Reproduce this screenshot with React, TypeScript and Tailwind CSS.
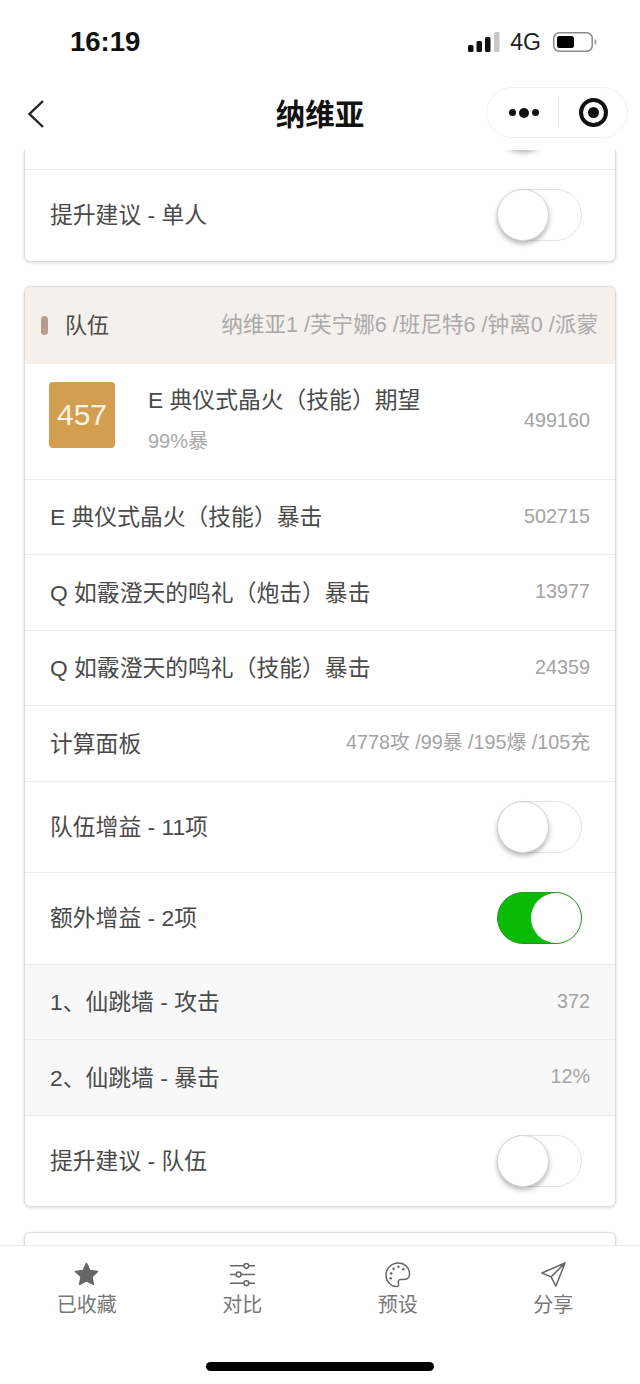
import React from "react";

type ToggleProps = {
  on?: boolean;
};

const Toggle = ({ on }: ToggleProps) => {
  if (on) {
    return (
      <div className="flex h-[52px] w-[85px] shrink-0 justify-end rounded-full border border-[#2f8f2f] bg-[#09bb07]">
        <div className="h-[50px] w-[50px] rounded-full bg-white" />
      </div>
    );
  }
  return (
    <div className="h-[52px] w-[85px] shrink-0 rounded-full border border-[#e3e3e3] bg-white">
      <div className="-ml-px -mt-px h-[52px] w-[52px] rounded-full border border-[#d4d4d4] bg-white shadow-[0_3px_5px_rgba(0,0,0,0.28)]" />
    </div>
  );
};

type RowProps = {
  label: string;
  value?: string;
  shaded?: boolean;
};

const Row = ({ label, value, shaded }: RowProps) => (
  <div
    className={`flex h-[75.5px] items-center justify-between border-t border-[#ececec] pl-[25px] pr-[25px] ${
      shaded ? "bg-[#f8f8f8]" : ""
    }`}
  >
    <span className="text-[22.8px] text-[#4a4a4a]">{label}</span>
    <span className="pb-px text-[19.8px] text-[#a3a3a3]">{value}</span>
  </div>
);

const ToggleRow = ({ label, on }: { label: string; on?: boolean }) => (
  <div className="flex h-[91.5px] items-center justify-between border-t border-[#ececec] pb-px pl-[25px] pr-[33px]">
    <span className="text-[22.8px] text-[#4a4a4a]">{label}</span>
    <Toggle on={on} />
  </div>
);

const StatusBar = () => (
  <div className="flex h-[84px] shrink-0 items-center justify-between pl-[70px] pr-[43px]">
    <span className="text-[27.5px] font-bold text-[#111]">16:19</span>
    <div className="flex items-center">
      <svg width="32" height="20" viewBox="0 0 32 20">
        <rect x="0" y="13" width="5.5" height="7" rx="1.5" fill="#111" />
        <rect x="8.5" y="9" width="5.5" height="11" rx="1.5" fill="#111" />
        <rect x="17" y="5" width="5.5" height="15" rx="1.5" fill="#111" />
        <rect x="26" y="0" width="5.5" height="20" rx="1.5" fill="#c8c8c8" />
      </svg>
      <span className="ml-[10px] text-[23px] text-[#222]">4G</span>
      <svg className="ml-[12px]" width="44" height="20" viewBox="0 0 44 20">
        <rect x="0.75" y="0.75" width="38.5" height="18.5" rx="5.5" fill="none" stroke="#8a8a8a" strokeWidth="1.5" />
        <rect x="4" y="4" width="17" height="12" rx="2.5" fill="#000" />
        <path d="M41.5 7v6c1.3-.5 2-1.700 2-3s-.7-2.500-2-3z" fill="#9a9a9a" />
      </svg>
    </div>
  </div>
);

const NavBar = () => (
  <div className="relative flex h-[66px] shrink-0 items-center justify-center">
    <svg className="absolute left-[26px] top-[14px]" width="20" height="32" viewBox="0 0 20 32">
      <path d="M17 3 3.500 16 17 29" fill="none" stroke="#222" strokeWidth="2.400" />
    </svg>
    <span className="pb-[4px] text-[29.5px] font-bold text-[#111]">纳维亚</span>
    <div className="absolute left-[486px] top-[3px] flex h-[51px] w-[142px] items-center rounded-full border border-[#f1f1f1] bg-white">
      <div className="flex w-[71px] items-center justify-center gap-[3px] pl-[2px]">
        <span className="h-[7px] w-[7px] rounded-full bg-[#111]" />
        <span className="h-[10px] w-[10px] rounded-full bg-[#111]" />
        <span className="h-[7px] w-[7px] rounded-full bg-[#111]" />
      </div>
      <div className="h-[30px] w-px bg-[#e4e4e4]" />
      <div className="flex flex-1 items-center justify-center">
        <div className="flex h-[29px] w-[29px] items-center justify-center rounded-full border-[4px] border-[#111]">
          <div className="h-[11px] w-[11px] rounded-full bg-[#111]" />
        </div>
      </div>
    </div>
  </div>
);

const TeamCard = () => (
  <div className="mt-[24px] overflow-hidden rounded-[6px] border border-[#dcdcdc] bg-white shadow-[0_1px_3px_rgba(0,0,0,0.14)]">
    <div className="flex h-[77px] items-center justify-between bg-[#f4f1ec] pl-[16px] pr-[17px]">
      <div className="flex items-center">
        <span className="h-[19px] w-[7px] rounded-full bg-[#b79b8e]" />
        <span className="ml-[17px] text-[22px] text-[#4a4a4a]">队伍</span>
      </div>
      <span className="text-[21.6px] text-[#aaaaaa]">纳维亚1 /芙宁娜6 /班尼特6 /钟离0 /派蒙</span>
    </div>
    <div className="flex h-[115.4px] items-start pl-[24px] pr-[25px] pt-[18px]">
      <div className="flex h-[66px] w-[66px] shrink-0 items-center justify-center rounded-[4px] bg-[#d29e4f] text-[30px] text-[#fbf3e4]">
        457
      </div>
      <div className="ml-[33px] mt-[3px] flex flex-1 flex-col gap-[13px]">
        <span className="text-[22.8px] leading-[30px] text-[#4a4a4a]">E 典仪式晶火（技能）期望</span>
        <span className="text-[20px] leading-[26px] text-[#aaaaaa]">99%暴</span>
      </div>
      <span className="self-center pb-[18px] text-[19.8px] text-[#a3a3a3]">499160</span>
    </div>
    <Row label="E 典仪式晶火（技能）暴击" value="502715" />
    <Row label="Q 如霰澄天的鸣礼（炮击）暴击" value="13977" />
    <Row label="Q 如霰澄天的鸣礼（技能）暴击" value="24359" />
    <Row label="计算面板" value="4778攻 /99暴 /195爆 /105充" />
    <ToggleRow label="队伍增益 - 11项" />
    <ToggleRow label="额外增益 - 2项" on />
    <Row label="1、仙跳墙 - 攻击" value="372" shaded />
    <Row label="2、仙跳墙 - 暴击" value="12%" shaded />
    <ToggleRow label="提升建议 - 队伍" />
  </div>
);

const TabBar = () => (
  <div className="relative h-[139px] shrink-0 border-t border-[#ececec] bg-white">
    <div className="grid grid-cols-4 px-[9px] pt-[14px]">
      <div className="flex flex-col items-center text-[20px] leading-[28px] text-[#777777]">
        <svg className="my-px" width="27" height="27" viewBox="0 0 28 28">
          <path
            d="M14 2.500l3.500 7.300 8 1.100-5.800 5.500 1.400 7.900L14 20.500l-7.100 3.800 1.400-7.900-5.800-5.500 8-1.100z"
            fill="#666666"
            stroke="#666666"
            strokeWidth="1.500"
            strokeLinejoin="round"
          />
        </svg>
        <span className="mt-[2px]">已收藏</span>
      </div>
      <div className="flex flex-col items-center text-[20px] leading-[28px] text-[#777777]">
        <svg className="my-px" width="27" height="27" viewBox="0 0 28 28" fill="none" stroke="#666666" strokeWidth="1.500">
          <path d="M1 5h14.500M20.500 5H27M1 14h6.500M12.500 14H27M1 23h14.500M20.500 23H27" />
          <circle cx="18" cy="5" r="2.500" />
          <circle cx="10" cy="14" r="2.500" />
          <circle cx="18" cy="23" r="2.500" />
        </svg>
        <span className="mt-[2px]">对比</span>
      </div>
      <div className="flex flex-col items-center text-[20px] leading-[28px] text-[#777777]">
        <svg className="my-px" width="27" height="27" viewBox="0 0 28 28" fill="none" stroke="#666666" strokeWidth="1.500">
          <path d="M15 2C8 2 2 7.500 2 14.500 2 21 7 26.500 12.500 26.500c2.300 0 3-1.500 2.500-3-.6-1.800-.3-4 2.300-4.300 3-.3 9.200 1 9.200-5.700C26.500 7 21.500 2 15 2z" />
          <circle cx="7.500" cy="13" r="1.300" fill="#666666" stroke="none" />
          <circle cx="10" cy="8" r="1.300" fill="#666666" stroke="none" />
          <circle cx="15" cy="6" r="1.300" fill="#666666" stroke="none" />
          <circle cx="20" cy="8.500" r="1.300" fill="#666666" stroke="none" />
          <circle cx="7" cy="18" r="1.300" fill="#666666" stroke="none" />
        </svg>
        <span className="mt-[2px]">预设</span>
      </div>
      <div className="flex flex-col items-center text-[20px] leading-[28px] text-[#777777]">
        <svg className="my-px" width="27" height="27" viewBox="0 0 28 28" fill="none" stroke="#666666" strokeWidth="1.600" strokeLinejoin="round">
          <path d="M26 2 2 12.500l9.500 4 5 9.500zM26 2 11.500 16.500" />
        </svg>
        <span className="mt-[2px]">分享</span>
      </div>
    </div>
    <div className="absolute bottom-[13px] left-[206px] h-[9px] w-[228px] rounded-full bg-black" />
  </div>
);

export default function App() {
  return (
    <div className="flex h-[1384px] w-[640px] flex-col overflow-hidden bg-white font-['Liberation_Sans','Noto_Sans_CJK_SC',sans-serif]">
      <StatusBar />
      <NavBar />
      <div className="flex-1 overflow-hidden bg-white px-[24px]">
        <div className="overflow-hidden rounded-b-[6px] border-x border-b border-[#dcdcdc] bg-white shadow-[0_1px_3px_rgba(0,0,0,0.14)]">
          <div className="flex h-[19px] justify-end overflow-hidden pr-[33px]">
            <div className="-mt-[52px]">
              <Toggle />
            </div>
          </div>
          <ToggleRow label="提升建议 - 单人" />
        </div>
        <TeamCard />
        <div className="mt-[25px] h-[40px] rounded-t-[6px] border border-[#dcdcdc] bg-white shadow-[0_1px_3px_rgba(0,0,0,0.14)]" />
      </div>
      <TabBar />
    </div>
  );
}
